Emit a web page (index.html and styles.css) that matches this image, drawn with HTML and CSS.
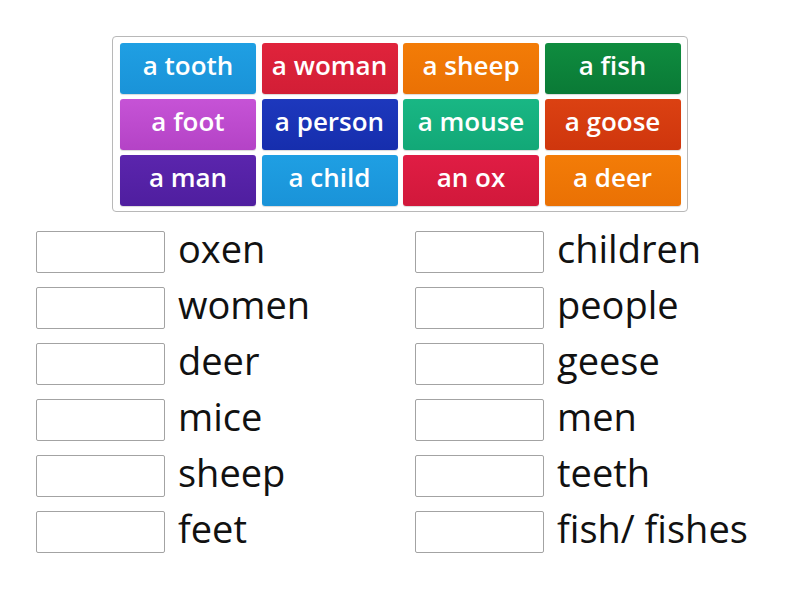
FILE: index.html
```html
<!DOCTYPE html>
<html>
<head>
<meta charset="utf-8">
<link rel="stylesheet" href="styles.css">
</head>
<body>
<div class="page">
  <div class="bank">
    <div class="tile c-blue">a tooth</div>
    <div class="tile c-red">a woman</div>
    <div class="tile c-orange">a sheep</div>
    <div class="tile c-green">a fish</div>
    <div class="tile c-magenta">a foot</div>
    <div class="tile c-navy">a person</div>
    <div class="tile c-teal">a mouse</div>
    <div class="tile c-rust">a goose</div>
    <div class="tile c-purple">a man</div>
    <div class="tile c-blue">a child</div>
    <div class="tile c-crimson">an ox</div>
    <div class="tile c-orange">a deer</div>
  </div>
  <div class="answers">
    <div class="col">
      <div class="row"><div class="box"></div><span class="word">oxen</span></div>
      <div class="row"><div class="box"></div><span class="word">women</span></div>
      <div class="row"><div class="box"></div><span class="word">deer</span></div>
      <div class="row"><div class="box"></div><span class="word">mice</span></div>
      <div class="row"><div class="box"></div><span class="word">sheep</span></div>
      <div class="row"><div class="box"></div><span class="word">feet</span></div>
    </div>
    <div class="col">
      <div class="row"><div class="box"></div><span class="word">children</span></div>
      <div class="row"><div class="box"></div><span class="word">people</span></div>
      <div class="row"><div class="box"></div><span class="word">geese</span></div>
      <div class="row"><div class="box"></div><span class="word">men</span></div>
      <div class="row"><div class="box"></div><span class="word">teeth</span></div>
      <div class="row"><div class="box"></div><span class="word">fish/ fishes</span></div>
    </div>
  </div>
</div>
</body>
</html>
```
FILE: styles.css
```css
html, body {
  margin: 0;
  padding: 0;
  background: #fff;
}
body {
  font-family: "Open Sans", "Liberation Sans", sans-serif;
  width: 800px;
  height: 600px;
  overflow: hidden;
}
.page {
  padding-top: 36px;
}
.bank {
  margin-left: 112px;
  width: 576px;
  height: 176px;
  box-sizing: border-box;
  border: 1px solid #b8b8b8;
  border-radius: 4px;
  padding: 6px 6px 6px 7px;
  display: grid;
  grid-template-columns: repeat(4, 136px);
  grid-template-rows: repeat(3, 51px);
  column-gap: 5.5px;
  row-gap: 5px;
}
.tile {
  border-radius: 3px;
  color: #fff;
  font-weight: 600;
  font-size: 26px;
  display: flex;
  align-items: center;
  justify-content: center;
  padding-bottom: 7px;
  box-sizing: border-box;
  box-shadow: 0 1px 1px rgba(0,0,0,0.15);
}
.c-blue { background: linear-gradient(#1f9fe3, #1a93d8); }
.c-red { background: linear-gradient(#e0233b, #d21e36); }
.c-orange { background: linear-gradient(#f37c07, #ea7104); }
.c-green { background: linear-gradient(#0f8c3f, #0a7a36); }
.c-magenta { background: linear-gradient(#c653d6, #b443c6); }
.c-navy { background: linear-gradient(#1d38bd, #162ead); }
.c-teal { background: linear-gradient(#19b784, #12a877); }
.c-rust { background: linear-gradient(#db4112, #cf360d); }
.c-purple { background: linear-gradient(#5b25ad, #4f1e9f); }
.c-crimson { background: linear-gradient(#e01d44, #d1183b); }
.answers {
  display: grid;
  grid-template-columns: 379px 1fr;
  margin-top: 19px;
  padding-left: 36px;
}
.col {
  display: flex;
  flex-direction: column;
  gap: 14px;
}
.row {
  display: flex;
  align-items: center;
  height: 42px;
}
.box {
  width: 129px;
  height: 42px;
  flex: none;
  box-sizing: border-box;
  border: 1px solid #a3a3a3;
  border-radius: 2px;
  background: #fff;
}
.word {
  margin-left: 13px;
  font-size: 38px;
  color: #111;
  line-height: 42px;
  white-space: nowrap;
  position: relative;
  top: -4px;
}
```
